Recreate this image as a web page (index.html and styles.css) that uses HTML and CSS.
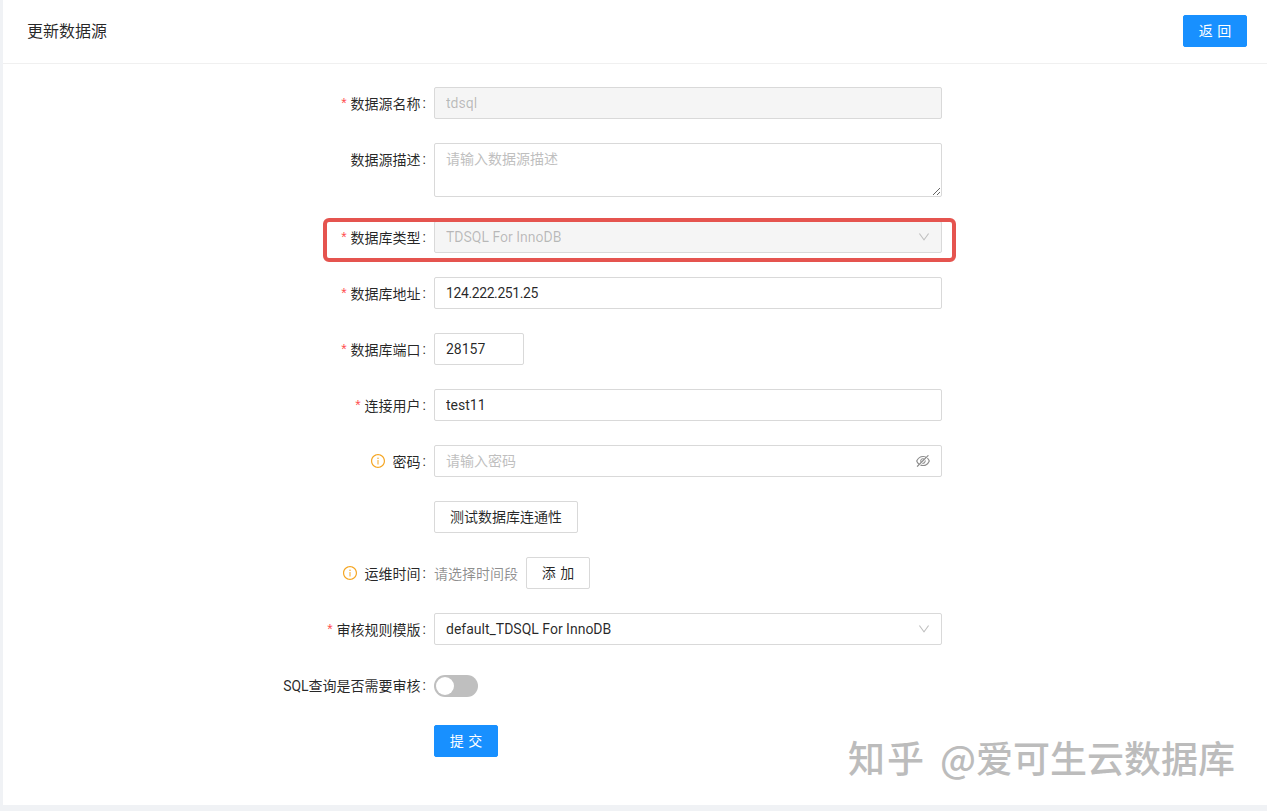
FILE: index.html
```html
<!DOCTYPE html>
<html lang="zh">
<head>
<meta charset="utf-8">
<title>更新数据源</title>
<link rel="stylesheet" href="styles.css">
</head>
<body>
<main class="card">
  <header class="card-head">
    <h1 class="title">更新数据源</h1>
    <button class="btn btn-primary btn-two" type="button">返 回</button>
  </header>
  <form class="form">
    <div class="row">
      <label class="label"><span class="req">*</span>数据源名称<span class="colon">:</span></label>
      <input class="control disabled" value="tdsql" disabled>
    </div>
    <div class="row row-top">
      <label class="label">数据源描述<span class="colon">:</span></label>
      <textarea class="control area" placeholder="请输入数据源描述"></textarea>
    </div>
    <div class="row">
      <div class="highlight"></div>
      <label class="label"><span class="req">*</span>数据库类型<span class="colon">:</span></label>
      <div class="control select disabled"><span>TDSQL For InnoDB</span>
        <svg class="arrow" viewBox="64 64 896 896"><path d="M884 256h-75c-5.1 0-9.9 2.5-12.9 6.6L512 654.2 227.9 262.6c-3-4.1-7.8-6.6-12.9-6.6h-75c-6.5 0-10.3 7.4-6.5 12.7l352.6 486.1c12.8 17.6 39 17.6 51.7 0l352.6-486.1c3.9-5.3.1-12.7-6.4-12.7z"/></svg>
      </div>
    </div>
    <div class="row">
      <label class="label"><span class="req">*</span>数据库地址<span class="colon">:</span></label>
      <input class="control tight" value="124.222.251.25">
    </div>
    <div class="row">
      <label class="label"><span class="req">*</span>数据库端口<span class="colon">:</span></label>
      <input class="control port" value="28157">
    </div>
    <div class="row">
      <label class="label"><span class="req">*</span>连接用户<span class="colon">:</span></label>
      <input class="control" value="test11">
    </div>
    <div class="row">
      <label class="label">
        <svg class="info" viewBox="64 64 896 896"><path d="M512 64C264.6 64 64 264.6 64 512s200.6 448 448 448 448-200.6 448-448S759.4 64 512 64zm0 820c-205.4 0-372-166.6-372-372s166.6-372 372-372 372 166.6 372 372-166.6 372-372 372z"/><path d="M464 336a48 48 0 1096 0 48 48 0 10-96 0zm72 112h-48c-4.4 0-8 3.6-8 8v272c0 4.4 3.6 8 8 8h48c4.4 0 8-3.6 8-8V456c0-4.4-3.6-8-8-8z"/></svg>密码<span class="colon">:</span></label>
      <div class="control password">
        <input class="bare" placeholder="请输入密码">
        <svg class="eye" viewBox="64 64 896 896"><path d="M942.2 486.2Q889.47 375.11 816.7 305l-50.88 50.88C807.31 395.53 843.45 447.4 874.7 512 791.5 684.2 673.4 766 512 766q-72.67 0-133.87-22.38L323 798.75Q408 838 512 838q288.3 0 430.2-300.3a60.29 60.29 0 000-51.5zm-63.57-320.64L836 122.88a8 8 0 00-11.32 0L715.31 232.2Q624.86 186 512 186q-288.3 0-430.2 300.3a60.3 60.3 0 000 51.5q56.69 119.4 136.5 191.41L112.48 835a8 8 0 000 11.31L155.17 889a8 8 0 0011.31 0l712.15-712.12a8 8 0 000-11.32zM149.3 512C232.6 339.8 350.7 258 512 258c54.54 0 104.13 9.36 149.12 28.39l-70.3 70.3a176 176 0 00-238.13 238.13l-83.42 83.42C223.1 637.49 183.3 582.28 149.3 512zm246.7 0a112.11 112.11 0 01146.2-106.69L401.31 546.2A112 112 0 01396 512z"/><path d="M508 624c-3.46 0-6.87-.16-10.25-.47l-52.82 52.82a176.09 176.09 0 00227.42-227.42l-52.82 52.82c.31 3.38.47 6.79.47 10.25a111.94 111.94 0 01-112 112z"/></svg>
      </div>
    </div>
    <div class="row">
      <div class="label"></div>
      <div><button class="btn" type="button">测试数据库连通性</button></div>
    </div>
    <div class="row">
      <label class="label">
        <svg class="info" viewBox="64 64 896 896"><path d="M512 64C264.6 64 64 264.6 64 512s200.6 448 448 448 448-200.6 448-448S759.4 64 512 64zm0 820c-205.4 0-372-166.6-372-372s166.6-372 372-372 372 166.6 372 372-166.6 372-372 372z"/><path d="M464 336a48 48 0 1096 0 48 48 0 10-96 0zm72 112h-48c-4.4 0-8 3.6-8 8v272c0 4.4 3.6 8 8 8h48c4.4 0 8-3.6 8-8V456c0-4.4-3.6-8-8-8z"/></svg>运维时间<span class="colon">:</span></label>
      <div class="inline">
        <span class="hint">请选择时间段</span>
        <button class="btn btn-two" type="button">添 加</button>
      </div>
    </div>
    <div class="row">
      <label class="label"><span class="req">*</span>审核规则模版<span class="colon">:</span></label>
      <div class="control select"><span>default_TDSQL For InnoDB</span>
        <svg class="arrow" viewBox="64 64 896 896"><path d="M884 256h-75c-5.1 0-9.9 2.5-12.9 6.6L512 654.2 227.9 262.6c-3-4.1-7.8-6.6-12.9-6.6h-75c-6.5 0-10.3 7.4-6.5 12.7l352.6 486.1c12.8 17.6 39 17.6 51.7 0l352.6-486.1c3.9-5.3.1-12.7-6.4-12.7z"/></svg>
      </div>
    </div>
    <div class="row">
      <label class="label">SQL查询是否需要审核<span class="colon">:</span></label>
      <div class="inline"><span class="switch"><span class="knob"></span></span></div>
    </div>
    <div class="row">
      <div class="label"></div>
      <div><button class="btn btn-primary btn-two" type="button">提 交</button></div>
    </div>
  </form>
  <div class="watermark"><span class="wm-brand">知乎</span>@爱可生云数据库</div>
</main>
</body>
</html>
```
FILE: styles.css
```css
* { box-sizing: border-box; }
html, body { margin: 0; height: 811px; overflow: hidden; }
body {
  background: #f0f2f5;
  padding: 0 0 6px 3px;
  font-family: Roboto, "Noto Sans CJK SC", sans-serif;
  font-size: 14px;
  color: rgba(0, 0, 0, 0.85);
}
.card { position: relative; height: 805px; background: #fff; }
.card-head {
  display: flex;
  align-items: center;
  justify-content: space-between;
  height: 64px;
  padding: 0 20px 2px 24px;
  border-bottom: 1px solid #f0f0f0;
}
.title { margin: 0 0 1px; font-size: 16px; font-weight: 400; }
.form { padding-top: 23px; }
.row {
  position: relative;
  display: grid;
  grid-template-columns: 431px 508px;
  align-items: center;
  margin-bottom: 24px;
  min-height: 32px;
}
.row-top { align-items: start; }
.label {
  display: flex;
  align-items: center;
  justify-content: flex-end;
  height: 32px;
  padding: 0 8px 1px 0;
  white-space: nowrap;
}
.colon { margin-left: 2px; }
.req { color: #ff4d4f; margin-right: 4px; font-family: "Liberation Sans", sans-serif; }
.control {
  display: block;
  width: 100%;
  height: 32px;
  padding: 4px 11px;
  border: 1px solid #d9d9d9;
  border-radius: 2px;
  background: #fff;
  color: rgba(0, 0, 0, 0.85);
  font: inherit;
  line-height: 22px;
}
.tight { letter-spacing: -0.4px; }
.control::placeholder, .bare::placeholder { color: #bfbfbf; }
.area { height: 54px; resize: vertical; }
.port { width: 90px; }
.disabled, .control:disabled { background: #f5f5f5; color: rgba(0, 0, 0, 0.25); }
.select, .password { display: flex; align-items: center; justify-content: space-between; }
.arrow { width: 12px; height: 12px; fill: #bfbfbf; }
.bare { flex: 1; min-width: 0; border: 0; outline: 0; padding: 0; font: inherit; background: none; }
.eye { width: 14px; height: 14px; fill: rgba(0, 0, 0, 0.45); }
.info { width: 14px; height: 14px; margin-right: 8px; fill: #f5a623; }
.inline { display: flex; align-items: center; gap: 8px; }
.hint { color: rgba(0, 0, 0, 0.45); padding-bottom: 1px; }
.btn {
  height: 32px;
  padding: 4px 15px;
  border: 1px solid #d9d9d9;
  border-radius: 2px;
  background: #fff;
  color: rgba(0, 0, 0, 0.85);
  font: inherit;
  line-height: 22px;
}
.btn-two { width: 64px; padding: 4px 0; word-spacing: 1px; }
.btn-primary { background: #1890ff; border-color: #1890ff; color: #fff; }
.switch {
  display: block;
  position: relative;
  width: 44px;
  height: 22px;
  margin-top: 1px;
  border-radius: 11px;
  background: #bfbfbf;
}
.knob {
  position: absolute;
  top: 2px;
  left: 2px;
  width: 18px;
  height: 18px;
  border-radius: 50%;
  background: #fff;
}
.highlight {
  position: absolute;
  top: -3px;
  left: 320px;
  width: 633px;
  height: 44px;
  border: 4px solid #e5544f;
  border-radius: 6px;
  z-index: 1;
  pointer-events: none;
}
.watermark {
  position: absolute;
  right: 32px;
  top: 731px;
  font-family: "Noto Sans CJK SC", sans-serif;
  font-size: 37px;
  font-weight: 500;
  line-height: 52px;
  white-space: nowrap;
  color: #bcbcbc;
  text-shadow: 1px 1px 0 #fff;
}
.wm-brand { letter-spacing: 2px; margin-right: 14px; }
```
